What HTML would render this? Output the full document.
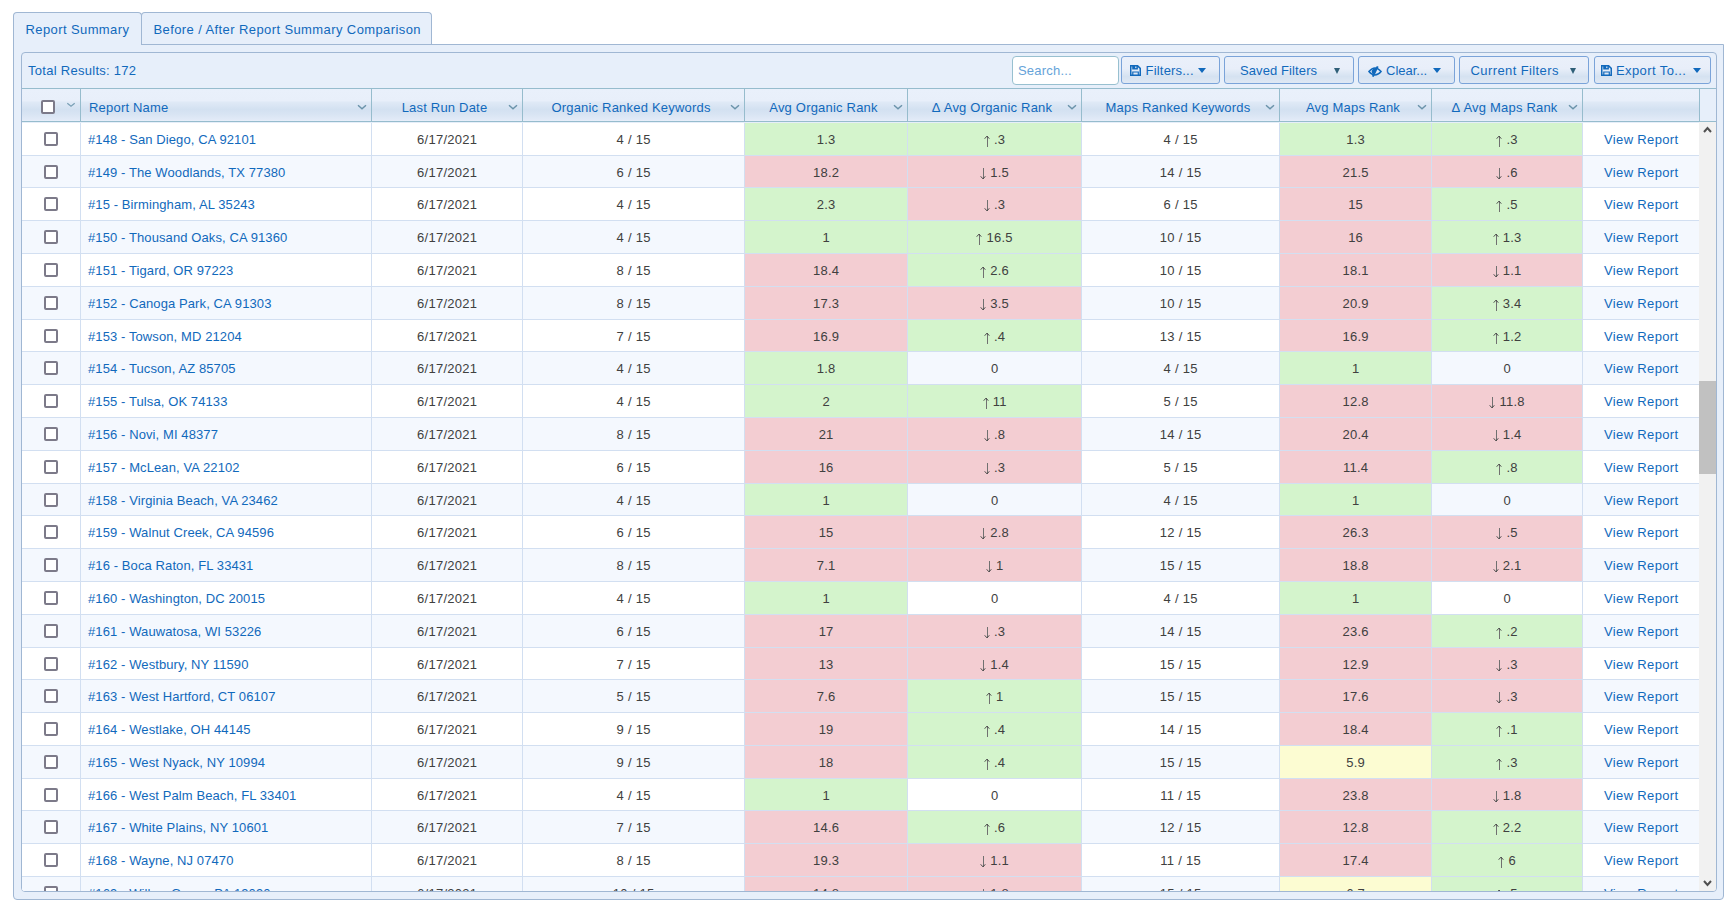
<!DOCTYPE html>
<html><head><meta charset="utf-8"><style>
*{box-sizing:border-box}
html,body{margin:0;padding:0;background:#fff;width:1731px;height:910px;overflow:hidden;font-family:"Liberation Sans",sans-serif;font-size:13px}
.abs{position:absolute}
.tab{position:absolute;top:12px;height:33px;border:1px solid #a0b7d3;border-bottom:none;border-radius:4px 4px 0 0;background:#e7effa;color:#1169bc;line-height:33px;padding-left:11.5px;white-space:nowrap;letter-spacing:0.4px}
.panel{position:absolute;left:13px;top:44px;width:1711px;height:856px;border:1px solid #a0b7d3;border-radius:0 0 4px 4px;background:#e7effa}
.grid{position:absolute;left:21px;top:52px;width:1696px;height:840px;border:1px solid #a0b7d3;border-radius:4px;background:#e7effa;overflow:hidden}
.total{position:absolute;left:6px;top:9px;color:#1169bc;line-height:18px;letter-spacing:0.28px}
.search{position:absolute;left:990px;top:3px;width:107px;height:29px;border:1px solid #98c0d0;border-radius:4px;background:#fff;color:#65a3d9;padding-left:5px;line-height:28px;letter-spacing:0.2px}
.btn{position:absolute;top:3px;height:28px;border:1px solid #7aa3d9;border-radius:3px;background:linear-gradient(#eaf0fa 0%,#e8eef9 45%,#d5e2f1 75%,#dfe8f4 100%);color:#1169bc;line-height:26px;white-space:nowrap}
.btn svg{position:absolute}
.btn .t{position:absolute;top:1px}
.car{position:absolute;width:0;height:0;border-left:4px solid transparent;border-right:4px solid transparent;border-top:5px solid #1169bc}
.car.dk{border-top-color:#2f5f78;border-left-width:3.5px;border-right-width:3.5px;border-top-width:6px}
.hdr{position:absolute;left:0;top:35px;width:1694px;height:34px;border-top:1px solid #96bccd;border-bottom:1px solid #96bccd;background:linear-gradient(#e9f0fb 0%,#e8effa 36%,#dfe9f6 42%,#d3e1f1 64%,#d8e4f3 78%,#e1eaf7 95%,#e8effa 100%)}
.th{position:absolute;top:0;height:32px;color:#1169bc;white-space:nowrap}
.th .tx{position:absolute;top:11px;line-height:16px;letter-spacing:0.2px}
.th.tc .tx{left:0;right:5px;text-align:center}
.chev{position:absolute;right:4px;top:15px}
.chev.c0{right:4px;top:13px}
.hb{position:absolute;top:0;width:1px;height:32px;background:#96bccd}
.hsb{position:absolute;left:1678px;top:0;width:16px;height:32px;background:#e7effa}
.cb{position:absolute;width:14px;height:14px;border:2px solid #7c7a89;border-radius:2px;background:#fff}
.hcb{left:19px;top:11px}
.th .chev0{}
.body{position:absolute;left:0;top:69px;width:1677px;height:769px;overflow:hidden;background:#fff}
.tr{position:absolute;left:0;width:1677px;height:32.79px;background:#fff}
.tr.alt{background:#f4f8fe}
.td{position:absolute;top:auto;height:100%;border-bottom:1px solid #d2dff1;text-align:center;color:#404040;line-height:33px;white-space:nowrap;letter-spacing:0.25px;padding-left:0.25px}
.ar{display:inline-block;vertical-align:-3px;margin-right:4px}
.td.bl{border-left:1px solid #d2dff1}
.td.g{background:#d4f4cc}
.td.r{background:#f3cdd2}
.td.y{background:#fcfcd2}
.td .cb{left:22px;top:9px}
.td.nm{text-align:left;padding-left:7px;letter-spacing:0.1px}
a{color:#1169bc;text-decoration:none}
.sb{position:absolute;left:1677px;top:69px;width:17px;height:769px;background:#f1f1f1}
.thumb{position:absolute;left:0;top:259px;width:17px;height:93px;background:#c1c1c1}
.sbu{position:absolute;left:4px;top:4px}
.sbd{position:absolute;left:4px;top:757.7px}
</style></head><body>
<div class="panel"></div>
<div class="tab" style="left:13px;width:129px;height:33px;z-index:2">Report Summary</div>
<div class="tab" style="left:141px;width:291px;height:32px;z-index:1">Before / After Report Summary Comparison</div>
<div class="grid">
  <div class="total">Total Results: 172</div>
  <div class="search">Search...</div>
  <div class="btn" style="left:1099px;width:99px"><svg style="left:8px;top:7.8px" width="11" height="11" viewBox="0 0 11 11"><path d="M0.75 0.75 H7.6 L10.25 3.4 V10.25 H0.75 Z" fill="none" stroke="#1169bc" stroke-width="1.5"/><path d="M2.2 0.8 H7.9 V4.4 H2.2 Z" fill="#1169bc"/><rect x="5.2" y="1.5" width="1.2" height="1.6" fill="#e3ecf8"/><path d="M2.8 10.25 V7 H8.3 V10.25" fill="none" stroke="#1169bc" stroke-width="1.2"/></svg><span class="t" style="left:23.5px;letter-spacing:0.2px">Filters...</span><span class="car" style="left:76px;top:11px"></span></div>
  <div class="btn" style="left:1202px;width:130px"><span class="t" style="left:15px;letter-spacing:0.1px">Saved Filters</span><span class="car dk" style="left:109px;top:11px"></span></div>
  <div class="btn" style="left:1336px;width:97px"><svg style="left:8.8px;top:8.5px" width="14" height="11" viewBox="0 0 14 11"><path d="M0.9 5.5 Q7 -1.6 13.1 5.5 Q7 12.6 0.9 5.5 Z" fill="none" stroke="#1169bc" stroke-width="1.5"/><path d="M3.6 5 Q4.6 2 9.2 1.4 L5.8 8.6 Q3.4 7.2 3.6 5 Z" fill="#1169bc"/><path d="M9.7 0.4 L4.8 10.6" stroke="#1169bc" stroke-width="2"/></svg><span class="t" style="left:27px">Clear...</span><span class="car" style="left:74px;top:11px"></span></div>
  <div class="btn" style="left:1437px;width:130px"><span class="t" style="left:10.5px;letter-spacing:0.4px">Current Filters</span><span class="car dk" style="left:110px;top:11px"></span></div>
  <div class="btn" style="left:1572px;width:117px"><svg style="left:5.5px;top:7.8px" width="11" height="11" viewBox="0 0 11 11"><path d="M0.75 0.75 H7.6 L10.25 3.4 V10.25 H0.75 Z" fill="none" stroke="#1169bc" stroke-width="1.5"/><path d="M2.2 0.8 H7.9 V4.4 H2.2 Z" fill="#1169bc"/><rect x="5.2" y="1.5" width="1.2" height="1.6" fill="#e3ecf8"/><path d="M2.8 10.25 V7 H8.3 V10.25" fill="none" stroke="#1169bc" stroke-width="1.2"/></svg><span class="t" style="left:21px;letter-spacing:0.4px">Export To...</span><span class="car" style="left:98px;top:11px"></span></div>
  <div class="hdr"><div class="th" style="left:0px;width:58px"><span class="cb hcb"></span><svg class="chev c0" width="10" height="6" viewBox="0 0 10 6"><path d="M1.3 1.2 L5 4.3 L8.7 1.2" fill="none" stroke="#7aa0b5" stroke-width="1.2"/></svg></div><div class="hb" style="left:58px"></div><div class="th tl" style="left:59px;width:290px"><span class="tx" style="left:8px">Report Name</span><svg class="chev" width="10" height="6" viewBox="0 0 10 6"><path d="M1 1.3 L5 4.7 L9 1.3" fill="none" stroke="#6a93aa" stroke-width="1.5"/></svg></div><div class="hb" style="left:349px"></div><div class="th tc" style="left:350px;width:150px"><span class="tx">Last Run Date</span><svg class="chev" width="10" height="6" viewBox="0 0 10 6"><path d="M1 1.3 L5 4.7 L9 1.3" fill="none" stroke="#6a93aa" stroke-width="1.5"/></svg></div><div class="hb" style="left:500px"></div><div class="th tc" style="left:501px;width:221px"><span class="tx">Organic Ranked Keywords</span><svg class="chev" width="10" height="6" viewBox="0 0 10 6"><path d="M1 1.3 L5 4.7 L9 1.3" fill="none" stroke="#6a93aa" stroke-width="1.5"/></svg></div><div class="hb" style="left:722px"></div><div class="th tc" style="left:723px;width:162px"><span class="tx">Avg Organic Rank</span><svg class="chev" width="10" height="6" viewBox="0 0 10 6"><path d="M1 1.3 L5 4.7 L9 1.3" fill="none" stroke="#6a93aa" stroke-width="1.5"/></svg></div><div class="hb" style="left:885px"></div><div class="th tc" style="left:886px;width:173px"><span class="tx">Δ Avg Organic Rank</span><svg class="chev" width="10" height="6" viewBox="0 0 10 6"><path d="M1 1.3 L5 4.7 L9 1.3" fill="none" stroke="#6a93aa" stroke-width="1.5"/></svg></div><div class="hb" style="left:1059px"></div><div class="th tc" style="left:1060px;width:197px"><span class="tx">Maps Ranked Keywords</span><svg class="chev" width="10" height="6" viewBox="0 0 10 6"><path d="M1 1.3 L5 4.7 L9 1.3" fill="none" stroke="#6a93aa" stroke-width="1.5"/></svg></div><div class="hb" style="left:1257px"></div><div class="th tc" style="left:1258px;width:151px"><span class="tx">Avg Maps Rank</span><svg class="chev" width="10" height="6" viewBox="0 0 10 6"><path d="M1 1.3 L5 4.7 L9 1.3" fill="none" stroke="#6a93aa" stroke-width="1.5"/></svg></div><div class="hb" style="left:1409px"></div><div class="th tc" style="left:1410px;width:150px"><span class="tx">Δ Avg Maps Rank</span><svg class="chev" width="10" height="6" viewBox="0 0 10 6"><path d="M1 1.3 L5 4.7 L9 1.3" fill="none" stroke="#6a93aa" stroke-width="1.5"/></svg></div><div class="hb" style="left:1560px"></div><div class="th" style="left:1561px;width:116px"></div><div class="hb" style="left:1677px"></div><div class="hsb"></div></div>
  <div class="body"><div class="tr" style="top:1px;height:33px;"><div class="td c0" style="left:0;width:58px"><span class="cb"></span></div><div class="td bl nm" style="left:58px;width:291px"><a>#148 - San Diego, CA 92101</a></div><div class="td bl" style="left:349px;width:151px">6/17/2021</div><div class="td bl" style="left:500px;width:222px">4 / 15</div><div class="td bl g" style="left:722px;width:163px">1.3</div><div class="td bl g" style="left:885px;width:174px"><svg class="ar" width="6" height="12" viewBox="0 0 6 12"><path d="M3 1 V12" stroke="#707070" stroke-width="1" shape-rendering="crispEdges"/><path d="M0.7 3.7 L3 1.1 L5.3 3.7" fill="none" stroke="#4a4a4a" stroke-width="1"/></svg>.3</div><div class="td bl" style="left:1059px;width:198px">4 / 15</div><div class="td bl g" style="left:1257px;width:152px">1.3</div><div class="td bl g" style="left:1409px;width:151px"><svg class="ar" width="6" height="12" viewBox="0 0 6 12"><path d="M3 1 V12" stroke="#707070" stroke-width="1" shape-rendering="crispEdges"/><path d="M0.7 3.7 L3 1.1 L5.3 3.7" fill="none" stroke="#4a4a4a" stroke-width="1"/></svg>.3</div><div class="td bl vr" style="left:1560px;width:117px;letter-spacing:0.35px;padding-left:0.5px"><a>View Report</a></div></div><div class="tr alt" style="top:34px;height:32px;"><div class="td c0" style="left:0;width:58px"><span class="cb"></span></div><div class="td bl nm" style="left:58px;width:291px"><a>#149 - The Woodlands, TX 77380</a></div><div class="td bl" style="left:349px;width:151px">6/17/2021</div><div class="td bl" style="left:500px;width:222px">6 / 15</div><div class="td bl r" style="left:722px;width:163px">18.2</div><div class="td bl r" style="left:885px;width:174px"><svg class="ar" width="6" height="12" viewBox="0 0 6 12"><path d="M3 0 V11" stroke="#707070" stroke-width="1" shape-rendering="crispEdges"/><path d="M0.7 8.3 L3 10.9 L5.3 8.3" fill="none" stroke="#4a4a4a" stroke-width="1"/></svg>1.5</div><div class="td bl" style="left:1059px;width:198px">14 / 15</div><div class="td bl r" style="left:1257px;width:152px">21.5</div><div class="td bl r" style="left:1409px;width:151px"><svg class="ar" width="6" height="12" viewBox="0 0 6 12"><path d="M3 0 V11" stroke="#707070" stroke-width="1" shape-rendering="crispEdges"/><path d="M0.7 8.3 L3 10.9 L5.3 8.3" fill="none" stroke="#4a4a4a" stroke-width="1"/></svg>.6</div><div class="td bl vr" style="left:1560px;width:117px;letter-spacing:0.35px;padding-left:0.5px"><a>View Report</a></div></div><div class="tr" style="top:66px;height:33px;"><div class="td c0" style="left:0;width:58px"><span class="cb"></span></div><div class="td bl nm" style="left:58px;width:291px"><a>#15 - Birmingham, AL 35243</a></div><div class="td bl" style="left:349px;width:151px">6/17/2021</div><div class="td bl" style="left:500px;width:222px">4 / 15</div><div class="td bl g" style="left:722px;width:163px">2.3</div><div class="td bl r" style="left:885px;width:174px"><svg class="ar" width="6" height="12" viewBox="0 0 6 12"><path d="M3 0 V11" stroke="#707070" stroke-width="1" shape-rendering="crispEdges"/><path d="M0.7 8.3 L3 10.9 L5.3 8.3" fill="none" stroke="#4a4a4a" stroke-width="1"/></svg>.3</div><div class="td bl" style="left:1059px;width:198px">6 / 15</div><div class="td bl r" style="left:1257px;width:152px">15</div><div class="td bl g" style="left:1409px;width:151px"><svg class="ar" width="6" height="12" viewBox="0 0 6 12"><path d="M3 1 V12" stroke="#707070" stroke-width="1" shape-rendering="crispEdges"/><path d="M0.7 3.7 L3 1.1 L5.3 3.7" fill="none" stroke="#4a4a4a" stroke-width="1"/></svg>.5</div><div class="td bl vr" style="left:1560px;width:117px;letter-spacing:0.35px;padding-left:0.5px"><a>View Report</a></div></div><div class="tr alt" style="top:99px;height:33px;"><div class="td c0" style="left:0;width:58px"><span class="cb"></span></div><div class="td bl nm" style="left:58px;width:291px"><a>#150 - Thousand Oaks, CA 91360</a></div><div class="td bl" style="left:349px;width:151px">6/17/2021</div><div class="td bl" style="left:500px;width:222px">4 / 15</div><div class="td bl g" style="left:722px;width:163px">1</div><div class="td bl g" style="left:885px;width:174px"><svg class="ar" width="6" height="12" viewBox="0 0 6 12"><path d="M3 1 V12" stroke="#707070" stroke-width="1" shape-rendering="crispEdges"/><path d="M0.7 3.7 L3 1.1 L5.3 3.7" fill="none" stroke="#4a4a4a" stroke-width="1"/></svg>16.5</div><div class="td bl" style="left:1059px;width:198px">10 / 15</div><div class="td bl r" style="left:1257px;width:152px">16</div><div class="td bl g" style="left:1409px;width:151px"><svg class="ar" width="6" height="12" viewBox="0 0 6 12"><path d="M3 1 V12" stroke="#707070" stroke-width="1" shape-rendering="crispEdges"/><path d="M0.7 3.7 L3 1.1 L5.3 3.7" fill="none" stroke="#4a4a4a" stroke-width="1"/></svg>1.3</div><div class="td bl vr" style="left:1560px;width:117px;letter-spacing:0.35px;padding-left:0.5px"><a>View Report</a></div></div><div class="tr" style="top:132px;height:33px;"><div class="td c0" style="left:0;width:58px"><span class="cb"></span></div><div class="td bl nm" style="left:58px;width:291px"><a>#151 - Tigard, OR 97223</a></div><div class="td bl" style="left:349px;width:151px">6/17/2021</div><div class="td bl" style="left:500px;width:222px">8 / 15</div><div class="td bl r" style="left:722px;width:163px">18.4</div><div class="td bl g" style="left:885px;width:174px"><svg class="ar" width="6" height="12" viewBox="0 0 6 12"><path d="M3 1 V12" stroke="#707070" stroke-width="1" shape-rendering="crispEdges"/><path d="M0.7 3.7 L3 1.1 L5.3 3.7" fill="none" stroke="#4a4a4a" stroke-width="1"/></svg>2.6</div><div class="td bl" style="left:1059px;width:198px">10 / 15</div><div class="td bl r" style="left:1257px;width:152px">18.1</div><div class="td bl r" style="left:1409px;width:151px"><svg class="ar" width="6" height="12" viewBox="0 0 6 12"><path d="M3 0 V11" stroke="#707070" stroke-width="1" shape-rendering="crispEdges"/><path d="M0.7 8.3 L3 10.9 L5.3 8.3" fill="none" stroke="#4a4a4a" stroke-width="1"/></svg>1.1</div><div class="td bl vr" style="left:1560px;width:117px;letter-spacing:0.35px;padding-left:0.5px"><a>View Report</a></div></div><div class="tr alt" style="top:165px;height:33px;"><div class="td c0" style="left:0;width:58px"><span class="cb"></span></div><div class="td bl nm" style="left:58px;width:291px"><a>#152 - Canoga Park, CA 91303</a></div><div class="td bl" style="left:349px;width:151px">6/17/2021</div><div class="td bl" style="left:500px;width:222px">8 / 15</div><div class="td bl r" style="left:722px;width:163px">17.3</div><div class="td bl r" style="left:885px;width:174px"><svg class="ar" width="6" height="12" viewBox="0 0 6 12"><path d="M3 0 V11" stroke="#707070" stroke-width="1" shape-rendering="crispEdges"/><path d="M0.7 8.3 L3 10.9 L5.3 8.3" fill="none" stroke="#4a4a4a" stroke-width="1"/></svg>3.5</div><div class="td bl" style="left:1059px;width:198px">10 / 15</div><div class="td bl r" style="left:1257px;width:152px">20.9</div><div class="td bl g" style="left:1409px;width:151px"><svg class="ar" width="6" height="12" viewBox="0 0 6 12"><path d="M3 1 V12" stroke="#707070" stroke-width="1" shape-rendering="crispEdges"/><path d="M0.7 3.7 L3 1.1 L5.3 3.7" fill="none" stroke="#4a4a4a" stroke-width="1"/></svg>3.4</div><div class="td bl vr" style="left:1560px;width:117px;letter-spacing:0.35px;padding-left:0.5px"><a>View Report</a></div></div><div class="tr" style="top:198px;height:32px;"><div class="td c0" style="left:0;width:58px"><span class="cb"></span></div><div class="td bl nm" style="left:58px;width:291px"><a>#153 - Towson, MD 21204</a></div><div class="td bl" style="left:349px;width:151px">6/17/2021</div><div class="td bl" style="left:500px;width:222px">7 / 15</div><div class="td bl r" style="left:722px;width:163px">16.9</div><div class="td bl g" style="left:885px;width:174px"><svg class="ar" width="6" height="12" viewBox="0 0 6 12"><path d="M3 1 V12" stroke="#707070" stroke-width="1" shape-rendering="crispEdges"/><path d="M0.7 3.7 L3 1.1 L5.3 3.7" fill="none" stroke="#4a4a4a" stroke-width="1"/></svg>.4</div><div class="td bl" style="left:1059px;width:198px">13 / 15</div><div class="td bl r" style="left:1257px;width:152px">16.9</div><div class="td bl g" style="left:1409px;width:151px"><svg class="ar" width="6" height="12" viewBox="0 0 6 12"><path d="M3 1 V12" stroke="#707070" stroke-width="1" shape-rendering="crispEdges"/><path d="M0.7 3.7 L3 1.1 L5.3 3.7" fill="none" stroke="#4a4a4a" stroke-width="1"/></svg>1.2</div><div class="td bl vr" style="left:1560px;width:117px;letter-spacing:0.35px;padding-left:0.5px"><a>View Report</a></div></div><div class="tr alt" style="top:230px;height:33px;"><div class="td c0" style="left:0;width:58px"><span class="cb"></span></div><div class="td bl nm" style="left:58px;width:291px"><a>#154 - Tucson, AZ 85705</a></div><div class="td bl" style="left:349px;width:151px">6/17/2021</div><div class="td bl" style="left:500px;width:222px">4 / 15</div><div class="td bl g" style="left:722px;width:163px">1.8</div><div class="td bl" style="left:885px;width:174px">0</div><div class="td bl" style="left:1059px;width:198px">4 / 15</div><div class="td bl g" style="left:1257px;width:152px">1</div><div class="td bl" style="left:1409px;width:151px">0</div><div class="td bl vr" style="left:1560px;width:117px;letter-spacing:0.35px;padding-left:0.5px"><a>View Report</a></div></div><div class="tr" style="top:263px;height:33px;"><div class="td c0" style="left:0;width:58px"><span class="cb"></span></div><div class="td bl nm" style="left:58px;width:291px"><a>#155 - Tulsa, OK 74133</a></div><div class="td bl" style="left:349px;width:151px">6/17/2021</div><div class="td bl" style="left:500px;width:222px">4 / 15</div><div class="td bl g" style="left:722px;width:163px">2</div><div class="td bl g" style="left:885px;width:174px"><svg class="ar" width="6" height="12" viewBox="0 0 6 12"><path d="M3 1 V12" stroke="#707070" stroke-width="1" shape-rendering="crispEdges"/><path d="M0.7 3.7 L3 1.1 L5.3 3.7" fill="none" stroke="#4a4a4a" stroke-width="1"/></svg>11</div><div class="td bl" style="left:1059px;width:198px">5 / 15</div><div class="td bl r" style="left:1257px;width:152px">12.8</div><div class="td bl r" style="left:1409px;width:151px"><svg class="ar" width="6" height="12" viewBox="0 0 6 12"><path d="M3 0 V11" stroke="#707070" stroke-width="1" shape-rendering="crispEdges"/><path d="M0.7 8.3 L3 10.9 L5.3 8.3" fill="none" stroke="#4a4a4a" stroke-width="1"/></svg>11.8</div><div class="td bl vr" style="left:1560px;width:117px;letter-spacing:0.35px;padding-left:0.5px"><a>View Report</a></div></div><div class="tr alt" style="top:296px;height:33px;"><div class="td c0" style="left:0;width:58px"><span class="cb"></span></div><div class="td bl nm" style="left:58px;width:291px"><a>#156 - Novi, MI 48377</a></div><div class="td bl" style="left:349px;width:151px">6/17/2021</div><div class="td bl" style="left:500px;width:222px">8 / 15</div><div class="td bl r" style="left:722px;width:163px">21</div><div class="td bl r" style="left:885px;width:174px"><svg class="ar" width="6" height="12" viewBox="0 0 6 12"><path d="M3 0 V11" stroke="#707070" stroke-width="1" shape-rendering="crispEdges"/><path d="M0.7 8.3 L3 10.9 L5.3 8.3" fill="none" stroke="#4a4a4a" stroke-width="1"/></svg>.8</div><div class="td bl" style="left:1059px;width:198px">14 / 15</div><div class="td bl r" style="left:1257px;width:152px">20.4</div><div class="td bl r" style="left:1409px;width:151px"><svg class="ar" width="6" height="12" viewBox="0 0 6 12"><path d="M3 0 V11" stroke="#707070" stroke-width="1" shape-rendering="crispEdges"/><path d="M0.7 8.3 L3 10.9 L5.3 8.3" fill="none" stroke="#4a4a4a" stroke-width="1"/></svg>1.4</div><div class="td bl vr" style="left:1560px;width:117px;letter-spacing:0.35px;padding-left:0.5px"><a>View Report</a></div></div><div class="tr" style="top:329px;height:33px;"><div class="td c0" style="left:0;width:58px"><span class="cb"></span></div><div class="td bl nm" style="left:58px;width:291px"><a>#157 - McLean, VA 22102</a></div><div class="td bl" style="left:349px;width:151px">6/17/2021</div><div class="td bl" style="left:500px;width:222px">6 / 15</div><div class="td bl r" style="left:722px;width:163px">16</div><div class="td bl r" style="left:885px;width:174px"><svg class="ar" width="6" height="12" viewBox="0 0 6 12"><path d="M3 0 V11" stroke="#707070" stroke-width="1" shape-rendering="crispEdges"/><path d="M0.7 8.3 L3 10.9 L5.3 8.3" fill="none" stroke="#4a4a4a" stroke-width="1"/></svg>.3</div><div class="td bl" style="left:1059px;width:198px">5 / 15</div><div class="td bl r" style="left:1257px;width:152px">11.4</div><div class="td bl g" style="left:1409px;width:151px"><svg class="ar" width="6" height="12" viewBox="0 0 6 12"><path d="M3 1 V12" stroke="#707070" stroke-width="1" shape-rendering="crispEdges"/><path d="M0.7 3.7 L3 1.1 L5.3 3.7" fill="none" stroke="#4a4a4a" stroke-width="1"/></svg>.8</div><div class="td bl vr" style="left:1560px;width:117px;letter-spacing:0.35px;padding-left:0.5px"><a>View Report</a></div></div><div class="tr alt" style="top:362px;height:32px;"><div class="td c0" style="left:0;width:58px"><span class="cb"></span></div><div class="td bl nm" style="left:58px;width:291px"><a>#158 - Virginia Beach, VA 23462</a></div><div class="td bl" style="left:349px;width:151px">6/17/2021</div><div class="td bl" style="left:500px;width:222px">4 / 15</div><div class="td bl g" style="left:722px;width:163px">1</div><div class="td bl" style="left:885px;width:174px">0</div><div class="td bl" style="left:1059px;width:198px">4 / 15</div><div class="td bl g" style="left:1257px;width:152px">1</div><div class="td bl" style="left:1409px;width:151px">0</div><div class="td bl vr" style="left:1560px;width:117px;letter-spacing:0.35px;padding-left:0.5px"><a>View Report</a></div></div><div class="tr" style="top:394px;height:33px;"><div class="td c0" style="left:0;width:58px"><span class="cb"></span></div><div class="td bl nm" style="left:58px;width:291px"><a>#159 - Walnut Creek, CA 94596</a></div><div class="td bl" style="left:349px;width:151px">6/17/2021</div><div class="td bl" style="left:500px;width:222px">6 / 15</div><div class="td bl r" style="left:722px;width:163px">15</div><div class="td bl r" style="left:885px;width:174px"><svg class="ar" width="6" height="12" viewBox="0 0 6 12"><path d="M3 0 V11" stroke="#707070" stroke-width="1" shape-rendering="crispEdges"/><path d="M0.7 8.3 L3 10.9 L5.3 8.3" fill="none" stroke="#4a4a4a" stroke-width="1"/></svg>2.8</div><div class="td bl" style="left:1059px;width:198px">12 / 15</div><div class="td bl r" style="left:1257px;width:152px">26.3</div><div class="td bl r" style="left:1409px;width:151px"><svg class="ar" width="6" height="12" viewBox="0 0 6 12"><path d="M3 0 V11" stroke="#707070" stroke-width="1" shape-rendering="crispEdges"/><path d="M0.7 8.3 L3 10.9 L5.3 8.3" fill="none" stroke="#4a4a4a" stroke-width="1"/></svg>.5</div><div class="td bl vr" style="left:1560px;width:117px;letter-spacing:0.35px;padding-left:0.5px"><a>View Report</a></div></div><div class="tr alt" style="top:427px;height:33px;"><div class="td c0" style="left:0;width:58px"><span class="cb"></span></div><div class="td bl nm" style="left:58px;width:291px"><a>#16 - Boca Raton, FL 33431</a></div><div class="td bl" style="left:349px;width:151px">6/17/2021</div><div class="td bl" style="left:500px;width:222px">8 / 15</div><div class="td bl r" style="left:722px;width:163px">7.1</div><div class="td bl r" style="left:885px;width:174px"><svg class="ar" width="6" height="12" viewBox="0 0 6 12"><path d="M3 0 V11" stroke="#707070" stroke-width="1" shape-rendering="crispEdges"/><path d="M0.7 8.3 L3 10.9 L5.3 8.3" fill="none" stroke="#4a4a4a" stroke-width="1"/></svg>1</div><div class="td bl" style="left:1059px;width:198px">15 / 15</div><div class="td bl r" style="left:1257px;width:152px">18.8</div><div class="td bl r" style="left:1409px;width:151px"><svg class="ar" width="6" height="12" viewBox="0 0 6 12"><path d="M3 0 V11" stroke="#707070" stroke-width="1" shape-rendering="crispEdges"/><path d="M0.7 8.3 L3 10.9 L5.3 8.3" fill="none" stroke="#4a4a4a" stroke-width="1"/></svg>2.1</div><div class="td bl vr" style="left:1560px;width:117px;letter-spacing:0.35px;padding-left:0.5px"><a>View Report</a></div></div><div class="tr" style="top:460px;height:33px;"><div class="td c0" style="left:0;width:58px"><span class="cb"></span></div><div class="td bl nm" style="left:58px;width:291px"><a>#160 - Washington, DC 20015</a></div><div class="td bl" style="left:349px;width:151px">6/17/2021</div><div class="td bl" style="left:500px;width:222px">4 / 15</div><div class="td bl g" style="left:722px;width:163px">1</div><div class="td bl" style="left:885px;width:174px">0</div><div class="td bl" style="left:1059px;width:198px">4 / 15</div><div class="td bl g" style="left:1257px;width:152px">1</div><div class="td bl" style="left:1409px;width:151px">0</div><div class="td bl vr" style="left:1560px;width:117px;letter-spacing:0.35px;padding-left:0.5px"><a>View Report</a></div></div><div class="tr alt" style="top:493px;height:33px;"><div class="td c0" style="left:0;width:58px"><span class="cb"></span></div><div class="td bl nm" style="left:58px;width:291px"><a>#161 - Wauwatosa, WI 53226</a></div><div class="td bl" style="left:349px;width:151px">6/17/2021</div><div class="td bl" style="left:500px;width:222px">6 / 15</div><div class="td bl r" style="left:722px;width:163px">17</div><div class="td bl r" style="left:885px;width:174px"><svg class="ar" width="6" height="12" viewBox="0 0 6 12"><path d="M3 0 V11" stroke="#707070" stroke-width="1" shape-rendering="crispEdges"/><path d="M0.7 8.3 L3 10.9 L5.3 8.3" fill="none" stroke="#4a4a4a" stroke-width="1"/></svg>.3</div><div class="td bl" style="left:1059px;width:198px">14 / 15</div><div class="td bl r" style="left:1257px;width:152px">23.6</div><div class="td bl g" style="left:1409px;width:151px"><svg class="ar" width="6" height="12" viewBox="0 0 6 12"><path d="M3 1 V12" stroke="#707070" stroke-width="1" shape-rendering="crispEdges"/><path d="M0.7 3.7 L3 1.1 L5.3 3.7" fill="none" stroke="#4a4a4a" stroke-width="1"/></svg>.2</div><div class="td bl vr" style="left:1560px;width:117px;letter-spacing:0.35px;padding-left:0.5px"><a>View Report</a></div></div><div class="tr" style="top:526px;height:32px;"><div class="td c0" style="left:0;width:58px"><span class="cb"></span></div><div class="td bl nm" style="left:58px;width:291px"><a>#162 - Westbury, NY 11590</a></div><div class="td bl" style="left:349px;width:151px">6/17/2021</div><div class="td bl" style="left:500px;width:222px">7 / 15</div><div class="td bl r" style="left:722px;width:163px">13</div><div class="td bl r" style="left:885px;width:174px"><svg class="ar" width="6" height="12" viewBox="0 0 6 12"><path d="M3 0 V11" stroke="#707070" stroke-width="1" shape-rendering="crispEdges"/><path d="M0.7 8.3 L3 10.9 L5.3 8.3" fill="none" stroke="#4a4a4a" stroke-width="1"/></svg>1.4</div><div class="td bl" style="left:1059px;width:198px">15 / 15</div><div class="td bl r" style="left:1257px;width:152px">12.9</div><div class="td bl r" style="left:1409px;width:151px"><svg class="ar" width="6" height="12" viewBox="0 0 6 12"><path d="M3 0 V11" stroke="#707070" stroke-width="1" shape-rendering="crispEdges"/><path d="M0.7 8.3 L3 10.9 L5.3 8.3" fill="none" stroke="#4a4a4a" stroke-width="1"/></svg>.3</div><div class="td bl vr" style="left:1560px;width:117px;letter-spacing:0.35px;padding-left:0.5px"><a>View Report</a></div></div><div class="tr alt" style="top:558px;height:33px;"><div class="td c0" style="left:0;width:58px"><span class="cb"></span></div><div class="td bl nm" style="left:58px;width:291px"><a>#163 - West Hartford, CT 06107</a></div><div class="td bl" style="left:349px;width:151px">6/17/2021</div><div class="td bl" style="left:500px;width:222px">5 / 15</div><div class="td bl r" style="left:722px;width:163px">7.6</div><div class="td bl g" style="left:885px;width:174px"><svg class="ar" width="6" height="12" viewBox="0 0 6 12"><path d="M3 1 V12" stroke="#707070" stroke-width="1" shape-rendering="crispEdges"/><path d="M0.7 3.7 L3 1.1 L5.3 3.7" fill="none" stroke="#4a4a4a" stroke-width="1"/></svg>1</div><div class="td bl" style="left:1059px;width:198px">15 / 15</div><div class="td bl r" style="left:1257px;width:152px">17.6</div><div class="td bl r" style="left:1409px;width:151px"><svg class="ar" width="6" height="12" viewBox="0 0 6 12"><path d="M3 0 V11" stroke="#707070" stroke-width="1" shape-rendering="crispEdges"/><path d="M0.7 8.3 L3 10.9 L5.3 8.3" fill="none" stroke="#4a4a4a" stroke-width="1"/></svg>.3</div><div class="td bl vr" style="left:1560px;width:117px;letter-spacing:0.35px;padding-left:0.5px"><a>View Report</a></div></div><div class="tr" style="top:591px;height:33px;"><div class="td c0" style="left:0;width:58px"><span class="cb"></span></div><div class="td bl nm" style="left:58px;width:291px"><a>#164 - Westlake, OH 44145</a></div><div class="td bl" style="left:349px;width:151px">6/17/2021</div><div class="td bl" style="left:500px;width:222px">9 / 15</div><div class="td bl r" style="left:722px;width:163px">19</div><div class="td bl g" style="left:885px;width:174px"><svg class="ar" width="6" height="12" viewBox="0 0 6 12"><path d="M3 1 V12" stroke="#707070" stroke-width="1" shape-rendering="crispEdges"/><path d="M0.7 3.7 L3 1.1 L5.3 3.7" fill="none" stroke="#4a4a4a" stroke-width="1"/></svg>.4</div><div class="td bl" style="left:1059px;width:198px">14 / 15</div><div class="td bl r" style="left:1257px;width:152px">18.4</div><div class="td bl g" style="left:1409px;width:151px"><svg class="ar" width="6" height="12" viewBox="0 0 6 12"><path d="M3 1 V12" stroke="#707070" stroke-width="1" shape-rendering="crispEdges"/><path d="M0.7 3.7 L3 1.1 L5.3 3.7" fill="none" stroke="#4a4a4a" stroke-width="1"/></svg>.1</div><div class="td bl vr" style="left:1560px;width:117px;letter-spacing:0.35px;padding-left:0.5px"><a>View Report</a></div></div><div class="tr alt" style="top:624px;height:33px;"><div class="td c0" style="left:0;width:58px"><span class="cb"></span></div><div class="td bl nm" style="left:58px;width:291px"><a>#165 - West Nyack, NY 10994</a></div><div class="td bl" style="left:349px;width:151px">6/17/2021</div><div class="td bl" style="left:500px;width:222px">9 / 15</div><div class="td bl r" style="left:722px;width:163px">18</div><div class="td bl g" style="left:885px;width:174px"><svg class="ar" width="6" height="12" viewBox="0 0 6 12"><path d="M3 1 V12" stroke="#707070" stroke-width="1" shape-rendering="crispEdges"/><path d="M0.7 3.7 L3 1.1 L5.3 3.7" fill="none" stroke="#4a4a4a" stroke-width="1"/></svg>.4</div><div class="td bl" style="left:1059px;width:198px">15 / 15</div><div class="td bl y" style="left:1257px;width:152px">5.9</div><div class="td bl g" style="left:1409px;width:151px"><svg class="ar" width="6" height="12" viewBox="0 0 6 12"><path d="M3 1 V12" stroke="#707070" stroke-width="1" shape-rendering="crispEdges"/><path d="M0.7 3.7 L3 1.1 L5.3 3.7" fill="none" stroke="#4a4a4a" stroke-width="1"/></svg>.3</div><div class="td bl vr" style="left:1560px;width:117px;letter-spacing:0.35px;padding-left:0.5px"><a>View Report</a></div></div><div class="tr" style="top:657px;height:32px;"><div class="td c0" style="left:0;width:58px"><span class="cb"></span></div><div class="td bl nm" style="left:58px;width:291px"><a>#166 - West Palm Beach, FL 33401</a></div><div class="td bl" style="left:349px;width:151px">6/17/2021</div><div class="td bl" style="left:500px;width:222px">4 / 15</div><div class="td bl g" style="left:722px;width:163px">1</div><div class="td bl" style="left:885px;width:174px">0</div><div class="td bl" style="left:1059px;width:198px">11 / 15</div><div class="td bl r" style="left:1257px;width:152px">23.8</div><div class="td bl r" style="left:1409px;width:151px"><svg class="ar" width="6" height="12" viewBox="0 0 6 12"><path d="M3 0 V11" stroke="#707070" stroke-width="1" shape-rendering="crispEdges"/><path d="M0.7 8.3 L3 10.9 L5.3 8.3" fill="none" stroke="#4a4a4a" stroke-width="1"/></svg>1.8</div><div class="td bl vr" style="left:1560px;width:117px;letter-spacing:0.35px;padding-left:0.5px"><a>View Report</a></div></div><div class="tr alt" style="top:689px;height:33px;"><div class="td c0" style="left:0;width:58px"><span class="cb"></span></div><div class="td bl nm" style="left:58px;width:291px"><a>#167 - White Plains, NY 10601</a></div><div class="td bl" style="left:349px;width:151px">6/17/2021</div><div class="td bl" style="left:500px;width:222px">7 / 15</div><div class="td bl r" style="left:722px;width:163px">14.6</div><div class="td bl g" style="left:885px;width:174px"><svg class="ar" width="6" height="12" viewBox="0 0 6 12"><path d="M3 1 V12" stroke="#707070" stroke-width="1" shape-rendering="crispEdges"/><path d="M0.7 3.7 L3 1.1 L5.3 3.7" fill="none" stroke="#4a4a4a" stroke-width="1"/></svg>.6</div><div class="td bl" style="left:1059px;width:198px">12 / 15</div><div class="td bl r" style="left:1257px;width:152px">12.8</div><div class="td bl g" style="left:1409px;width:151px"><svg class="ar" width="6" height="12" viewBox="0 0 6 12"><path d="M3 1 V12" stroke="#707070" stroke-width="1" shape-rendering="crispEdges"/><path d="M0.7 3.7 L3 1.1 L5.3 3.7" fill="none" stroke="#4a4a4a" stroke-width="1"/></svg>2.2</div><div class="td bl vr" style="left:1560px;width:117px;letter-spacing:0.35px;padding-left:0.5px"><a>View Report</a></div></div><div class="tr" style="top:722px;height:33px;"><div class="td c0" style="left:0;width:58px"><span class="cb"></span></div><div class="td bl nm" style="left:58px;width:291px"><a>#168 - Wayne, NJ 07470</a></div><div class="td bl" style="left:349px;width:151px">6/17/2021</div><div class="td bl" style="left:500px;width:222px">8 / 15</div><div class="td bl r" style="left:722px;width:163px">19.3</div><div class="td bl r" style="left:885px;width:174px"><svg class="ar" width="6" height="12" viewBox="0 0 6 12"><path d="M3 0 V11" stroke="#707070" stroke-width="1" shape-rendering="crispEdges"/><path d="M0.7 8.3 L3 10.9 L5.3 8.3" fill="none" stroke="#4a4a4a" stroke-width="1"/></svg>1.1</div><div class="td bl" style="left:1059px;width:198px">11 / 15</div><div class="td bl r" style="left:1257px;width:152px">17.4</div><div class="td bl g" style="left:1409px;width:151px"><svg class="ar" width="6" height="12" viewBox="0 0 6 12"><path d="M3 1 V12" stroke="#707070" stroke-width="1" shape-rendering="crispEdges"/><path d="M0.7 3.7 L3 1.1 L5.3 3.7" fill="none" stroke="#4a4a4a" stroke-width="1"/></svg>6</div><div class="td bl vr" style="left:1560px;width:117px;letter-spacing:0.35px;padding-left:0.5px"><a>View Report</a></div></div><div class="tr alt" style="top:755px;height:33px;"><div class="td c0" style="left:0;width:58px"><span class="cb"></span></div><div class="td bl nm" style="left:58px;width:291px"><a>#169 - Willow Grove, PA 19090</a></div><div class="td bl" style="left:349px;width:151px">6/17/2021</div><div class="td bl" style="left:500px;width:222px">10 / 15</div><div class="td bl r" style="left:722px;width:163px">14.8</div><div class="td bl r" style="left:885px;width:174px"><svg class="ar" width="6" height="12" viewBox="0 0 6 12"><path d="M3 0 V11" stroke="#707070" stroke-width="1" shape-rendering="crispEdges"/><path d="M0.7 8.3 L3 10.9 L5.3 8.3" fill="none" stroke="#4a4a4a" stroke-width="1"/></svg>1.8</div><div class="td bl" style="left:1059px;width:198px">15 / 15</div><div class="td bl y" style="left:1257px;width:152px">6.7</div><div class="td bl g" style="left:1409px;width:151px"><svg class="ar" width="6" height="12" viewBox="0 0 6 12"><path d="M3 1 V12" stroke="#707070" stroke-width="1" shape-rendering="crispEdges"/><path d="M0.7 3.7 L3 1.1 L5.3 3.7" fill="none" stroke="#4a4a4a" stroke-width="1"/></svg>.5</div><div class="td bl vr" style="left:1560px;width:117px;letter-spacing:0.35px;padding-left:0.5px"><a>View Report</a></div></div><div style="position:absolute;left:0;top:0;width:1677px;height:1px;background:#e6eef9"></div></div>
  <div class="sb"><svg class="sbu" width="9" height="7" viewBox="0 0 9 7"><path d="M1 6 L4.5 2 L8 6" fill="none" stroke="#505050" stroke-width="2"/></svg><div class="thumb"></div><svg class="sbd" width="9" height="7" viewBox="0 0 9 7"><path d="M1 1 L4.5 5 L8 1" fill="none" stroke="#505050" stroke-width="2"/></svg></div>
</div>
</body></html>
